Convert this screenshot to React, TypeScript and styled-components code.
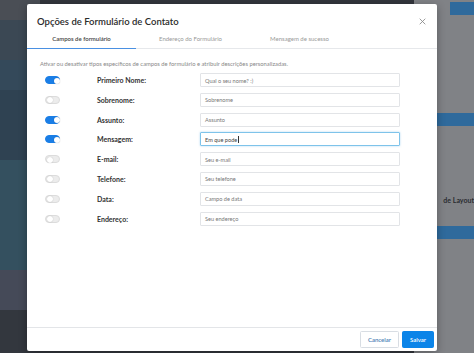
import styled, { createGlobalStyle } from "styled-components";

const GlobalStyle = createGlobalStyle`
  html, body { margin: 0; padding: 0; height: 100%; }
  body { font-family: Lato, "Noto Sans", sans-serif; overflow: hidden; }
  #root { height: 100%; }
  * { box-sizing: border-box; }
`;

const Page = styled.div`
  position: relative;
  width: 474px;
  height: 353px;
  display: flex;
  background: #2a323b;
`;

const LeftStrip = styled.div`
  width: 40px;
  background: linear-gradient(180deg, #4a4e55 0 20px, #3b4854 20px 60px, #34495a 60px 90px, #2f4252 90px 160px, #34505f 160px 270px, #454a58 270px 310px, #33373e 310px);
`;

const Center = styled.div`
  flex: 1;
  background: #33363c;
`;

const RightPanel = styled.div`
  width: 60px;
  background: #808286;
  display: flex;
  flex-direction: column;
  align-items: flex-end;
  padding-top: 2px;
`;

const BgButton = styled.div<{ $w: number; $mt: number }>`
  width: ${({ $w }) => $w}px;
  height: 13px;
  margin-top: ${({ $mt }) => $mt}px;
  background: #2f6a9c;
`;

const BgText = styled.div<{ $mt: number }>`
  margin-top: ${({ $mt }) => $mt}px;
  font-size: 7px;
  color: #2a2c30;
  font-weight: 700;
  white-space: nowrap;
`;

const Modal = styled.div`
  position: absolute;
  left: 27px;
  top: 4px;
  width: 410px;
  height: 347px;
  background: #fff;
  border-radius: 2px;
  display: flex;
  flex-direction: column;
  box-shadow: 0 2px 8px rgba(0, 0, 0, 0.3);
`;

const Header = styled.div`
  display: flex;
  justify-content: space-between;
  align-items: center;
  padding: 9px 10px 0 10px;
  height: 25px;
`;

const Title = styled.h2`
  margin: 0;
  font-size: 9.5px;
  font-weight: 600;
  color: #2b2b2b;
`;

const Close = styled.button`
  border: none;
  background: none;
  padding: 0;
  width: 10px;
  height: 10px;
  display: flex;
  align-items: center;
  justify-content: center;
  cursor: pointer;
`;

const Tabs = styled.div`
  display: flex;
  border-bottom: 1px solid #e6e8eb;
  height: 20px;
`;

const Tab = styled.div<{ $active?: boolean }>`
  width: 109px;
  display: flex;
  align-items: center;
  justify-content: center;
  font-size: 6px;
  color: ${({ $active }) => ($active ? "#444" : "#999")};
  font-weight: ${({ $active }) => ($active ? 600 : 400)};
  border-bottom: 1.5px solid ${({ $active }) => ($active ? "#4a90e2" : "transparent")};
  margin-bottom: -1px;
`;

const Body = styled.div`
  flex: 1;
  padding: 11px 13px 0 13px;
`;

const Description = styled.p`
  margin: 0 0 6px 0;
  font-size: 5.8px;
  color: #888;
`;

const Rows = styled.div`
  display: flex;
  flex-direction: column;
  gap: 5.8px;
`;

const Row = styled.div`
  display: grid;
  grid-template-columns: 52px 103px 200px;
  align-items: center;
  height: 14px;
  padding-left: 5px;
`;

const Toggle = styled.span<{ $on: boolean }>`
  position: relative;
  display: inline-block;
  width: 15px;
  height: 8px;
  border-radius: 4px;
  background: ${({ $on }) => ($on ? "#1a7ee6" : "#ececec")};
  border: 0.5px solid ${({ $on }) => ($on ? "#1a7ee6" : "#dcdcdc")};

  &::after {
    content: "";
    position: absolute;
    top: 0.5px;
    left: ${({ $on }) => ($on ? "7.5px" : "0.5px")};
    width: 6px;
    height: 6px;
    border-radius: 50%;
    background: #fff;
    box-shadow: 0 0 1px rgba(0, 0, 0, 0.3);
  }
`;

const Label = styled.span`
  font-size: 7px;
  font-weight: 700;
  color: #333;
`;

const Input = styled.div<{ $focus?: boolean }>`
  height: 14px;
  border: 1px solid ${({ $focus }) => ($focus ? "#7ec3ea" : "#e2e4e7")};
  border-radius: 1px;
  display: flex;
  align-items: center;
  padding-left: 4px;
  font-size: 5.6px;
  color: ${({ $focus }) => ($focus ? "#444" : "#777")};
  box-shadow: ${({ $focus }) => ($focus ? "0 0 2px rgba(80,170,230,0.5)" : "none")};
`;

const Caret = styled.span`
  display: inline-block;
  width: 0.5px;
  height: 7px;
  background: #333;
  margin-left: 0.5px;
`;

const Footer = styled.div`
  border-top: 1px solid #e3e5e8;
  height: 24px;
  display: flex;
  justify-content: flex-end;
  align-items: center;
  gap: 3px;
  padding-right: 3px;
`;

const Button = styled.button<{ $primary?: boolean }>`
  height: 17px;
  padding: 0 7px;
  font-family: inherit;
  font-size: 6px;
  font-weight: 600;
  border-radius: 1.5px;
  border: 1px solid ${({ $primary }) => ($primary ? "#0b84e8" : "#d8dde3")};
  background: ${({ $primary }) => ($primary ? "#0b84e8" : "#fff")};
  color: ${({ $primary }) => ($primary ? "#fff" : "#4a7fb5")};
`;

const fields = [
  { label: "Primeiro Nome:", value: "Qual o seu nome? :)", on: true },
  { label: "Sobrenome:", value: "Sobrenome", on: false },
  { label: "Assunto:", value: "Assunto", on: true },
  { label: "Mensagem:", value: "Em que pode", on: true, focus: true },
  { label: "E-mail:", value: "Seu e-mail", on: false },
  { label: "Telefone:", value: "Seu telefone", on: false },
  { label: "Data:", value: "Campo de data", on: false },
  { label: "Endereço:", value: "Seu endereço", on: false },
];

export default function App() {
  return (
    <>
      <GlobalStyle />
      <Page>
        <LeftStrip />
        <Center />
        <RightPanel>
          <BgButton $w={24} $mt={0} />
          <BgButton $w={38} $mt={98} />
          <BgText $mt={70}>de Layout</BgText>
          <BgButton $w={38} $mt={22} />
        </RightPanel>
        <Modal>
          <Header>
            <Title>Opções de Formulário de Contato</Title>
            <Close aria-label="Fechar">
              <svg width="7" height="7" viewBox="0 0 10 10">
                <path d="M1 1 L9 9 M9 1 L1 9" stroke="#888" strokeWidth="1.2" />
              </svg>
            </Close>
          </Header>
          <Tabs>
            <Tab $active>Campos de formulário</Tab>
            <Tab>Endereço do Formulário</Tab>
            <Tab>Mensagem de sucesso</Tab>
          </Tabs>
          <Body>
            <Description>
              Ativar ou desativar tipos específicos de campos de formulário e atribuir descrições personalizadas.
            </Description>
            <Rows>
              {fields.map((f) => (
                <Row key={f.label}>
                  <Toggle $on={f.on} />
                  <Label>{f.label}</Label>
                  <Input $focus={f.focus}>
                    {f.value}
                    {f.focus && <Caret />}
                  </Input>
                </Row>
              ))}
            </Rows>
          </Body>
          <Footer>
            <Button>Cancelar</Button>
            <Button $primary>Salvar</Button>
          </Footer>
        </Modal>
      </Page>
    </>
  );
}
